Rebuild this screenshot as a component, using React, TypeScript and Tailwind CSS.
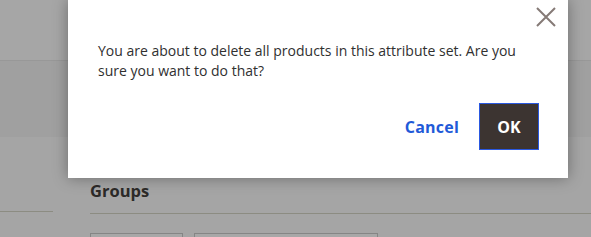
import React from "react";

export default function App() {
  return (
    <div className="relative w-[591px] h-[237px] overflow-hidden bg-[#a5a5a5] font-['Open_Sans',sans-serif]">
      {/* page behind overlay */}
      <div className="h-[61px] bg-[#a6a6a6] border-b border-[#989898]" />
      <div className="h-[76px] bg-[#a0a0a0]" />
      <div className="flex">
        <div className="w-[53px] shrink-0 pt-[74px]">
          <div className="h-px bg-[#8c8c82]" />
        </div>
        <div className="ml-[37px] flex-1 pt-[43px]">
          <div className="text-[16.5px] font-bold leading-[22px] text-[#2c2a28]">Groups</div>
          <div className="mt-[11px] h-px bg-[#8c8c82]" />
          <div className="mt-[19px] flex gap-[11px]">
            <div className="h-[20px] w-[93px] border border-[#858585] bg-[#a7a7a7]" />
            <div className="h-[20px] w-[184px] border border-[#858585] bg-[#a7a7a7]" />
          </div>
        </div>
      </div>

      {/* modal */}
      <div className="absolute left-[68px] top-0 w-[500px] h-[178px] bg-white shadow-[0_0_14px_rgba(0,0,0,0.35)]">
        <button className="absolute right-[11px] top-[6px] w-[22px] h-[22px] flex items-center justify-center">
          <svg width="22" height="22" viewBox="0 0 22 22">
            <path d="M2 2 L20 20 M20 2 L2 20" stroke="#857a76" strokeWidth="2" fill="none" />
          </svg>
        </button>
        <div className="pl-[30px] pr-[30px] pt-[41px]">
          <p className="text-[14px] leading-[20px] text-[#303030]">
            You are about to delete all products in this attribute set. Are you sure you want to do that?
          </p>
          <div className="mt-[22px] flex justify-end items-center">
            <span className="text-[16px] font-bold text-[#1f5ad8] tracking-[0.2px]">Cancel</span>
            <button className="ml-[20px] mr-[-1px] w-[60px] h-[47px] bg-[#3c3431] border border-[#2a58e0] text-white text-[16px] font-bold">
              OK
            </button>
          </div>
        </div>
      </div>
    </div>
  );
}
